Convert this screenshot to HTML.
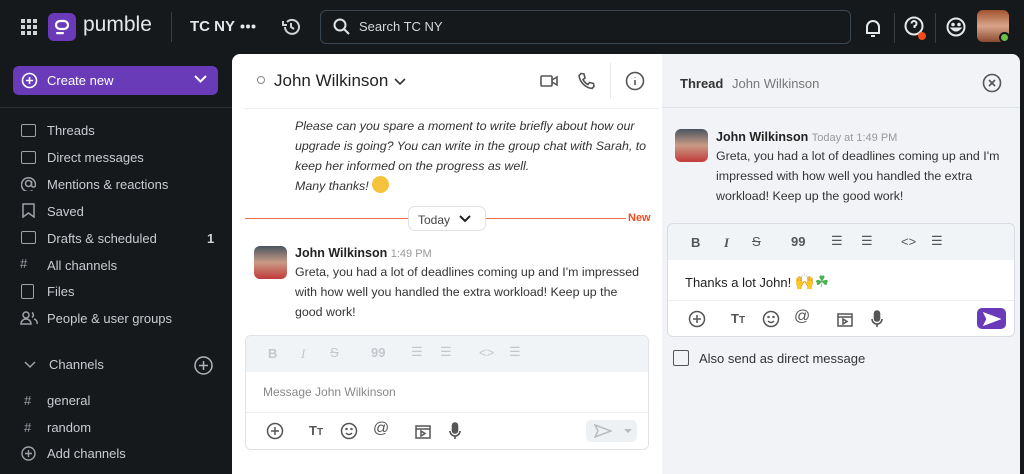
<!DOCTYPE html>
<html><head><meta charset="utf-8"><style>
*{box-sizing:border-box;margin:0;padding:0}
body{width:1024px;height:463px;overflow:hidden;background:#16191c;font-family:"Liberation Sans",sans-serif;position:relative}
.a{position:absolute}
.side{color:#c9ccd0;font-size:13px}
.side .it{position:absolute;left:47px}
.ic{position:absolute;left:21px;width:15px;height:13px;border:1.5px solid #9ea3a8;border-radius:2px}
svg{position:absolute}
.msg{font-size:12.4px}
</style></head><body>
<svg style="left:21px;top:19px" width="16" height="16"><g fill="#d0d3d6"><rect x="0" y="0" width="4" height="4"/><rect x="6" y="0" width="4" height="4"/><rect x="12" y="0" width="4" height="4"/><rect x="0" y="6" width="4" height="4"/><rect x="6" y="6" width="4" height="4"/><rect x="12" y="6" width="4" height="4"/><rect x="0" y="12" width="4" height="4"/><rect x="6" y="12" width="4" height="4"/><rect x="12" y="12" width="4" height="4"/></g></svg>
<div class="a" style="left:48px;top:13px;width:28px;height:28px;background:#6b3ab8;border-radius:6px"></div>
<svg style="left:48px;top:13px" width="28" height="28"><rect x="8" y="8" width="12" height="8" rx="4" fill="none" stroke="#fff" stroke-width="2.2"/><rect x="8" y="19" width="8" height="2.2" rx="1" fill="#fff"/></svg>
<div class="a" style="left:83px;top:13px;color:#e6e7e9;font-size:21px">pumble</div>
<div class="a" style="left:171px;top:12px;width:1px;height:30px;background:#3a3f44"></div>
<div class="a" style="left:190px;top:18px;color:#e6e7e9;font-size:15px;font-weight:bold">TC NY</div>
<svg style="left:240px;top:24px" width="16" height="5" fill="#e6e7e9"><circle cx="2.5" cy="2.5" r="2"/><circle cx="8" cy="2.5" r="2"/><circle cx="13.5" cy="2.5" r="2"/></svg>
<svg style="left:281px;top:17px" width="20" height="20" fill="none" stroke="#d0d3d6" stroke-width="2"><path d="M4 10a7 7 0 1 0 2-5"/><path d="M2 4v4h4"/><path d="M10 6v4l3 2"/></svg>
<div class="a" style="left:320px;top:10px;width:531px;height:34px;border:1.5px solid #3a4752;border-radius:6px"></div>
<svg style="left:333px;top:18px" width="18" height="18" fill="none" stroke="#e0e2e4" stroke-width="2"><circle cx="7" cy="7" r="5.5"/><path d="M11 11l5 5"/></svg>
<div class="a" style="left:359px;top:19px;color:#d6d8da;font-size:13px">Search TC NY</div>
<svg style="left:864px;top:18px" width="18" height="20" fill="none" stroke="#e6e7e9" stroke-width="2"><path d="M3 15V9a6 6 0 0 1 12 0v6zM2 15h14M7 18h4"/></svg>
<div class="a" style="left:894px;top:13px;width:1px;height:30px;background:#3a3f44"></div>
<svg style="left:904px;top:16px" width="22" height="22" fill="none" stroke="#e6e7e9" stroke-width="2"><circle cx="10" cy="10" r="8.5"/><path d="M7.5 7.5a2.5 2.5 0 1 1 3 2.5v2"/></svg>
<div class="a" style="left:918px;top:32px;width:8px;height:8px;border-radius:50%;background:#f04d1d"></div>
<div class="a" style="left:935px;top:13px;width:1px;height:30px;background:#3a3f44"></div>
<svg style="left:946px;top:17px" width="20" height="20" fill="none" stroke="#e6e7e9" stroke-width="2"><circle cx="10" cy="10" r="8.5"/><path d="M6 11.5q4 4 8 0z" fill="#e6e7e9"/><circle cx="7" cy="7.5" r=".8" fill="#e6e7e9"/><circle cx="13" cy="7.5" r=".8" fill="#e6e7e9"/></svg>
<div class="a" style="left:977px;top:10px;width:32px;height:32px;border-radius:6px;background:linear-gradient(#a0522d,#d9a58a 50%,#8b4a30)"></div>
<div class="a" style="left:999px;top:32px;width:11px;height:11px;border-radius:50%;background:#6cc04a;border:2px solid #16191c"></div>
<div class="a" style="left:13px;top:66px;width:205px;height:29px;background:#6a3bb8;border-radius:6px"></div>
<svg style="left:21px;top:72px" width="17" height="17" fill="none" stroke="#fff" stroke-width="1.6"><circle cx="8.5" cy="8.5" r="7"/><path d="M8.5 5v7M5 8.5h7"/></svg>
<div class="a" style="left:47px;top:73px;color:#fff;font-size:13px">Create new</div>
<svg style="left:194px;top:75px" width="13" height="9" fill="none" stroke="#fff" stroke-width="2"><path d="M1 1l5.5 5.5L12 1"/></svg>
<div class="a" style="left:0;top:107px;width:232px;height:1px;background:#2c3136"></div>
<div class="side">
<div class="ic" style="top:124px"></div><div class="it" style="top:123px">Threads</div>
<div class="ic" style="top:151px"></div><div class="it" style="top:150px">Direct messages</div>
<svg style="left:21px;top:176px" width="15" height="15" fill="none" stroke="#9ea3a8" stroke-width="1.5"><circle cx="7.5" cy="7.5" r="3"/><path d="M10.5 5v4a2 2 0 0 0 4 0 7 7 0 1 0-3 5.5"/></svg><div class="it" style="top:177px">Mentions &amp; reactions</div>
<svg style="left:22px;top:203px" width="13" height="15" fill="none" stroke="#9ea3a8" stroke-width="1.5"><path d="M1 1h11v13l-5.5-4L1 14z"/></svg><div class="it" style="top:204px">Saved</div>
<div class="ic" style="top:231px"></div><div class="it" style="top:231px">Drafts &amp; scheduled</div><div class="a" style="left:207px;top:231px;color:#d0d3d6;font-weight:bold">1</div>
<div class="a" style="left:20px;top:256px;color:#9ea3a8;font-size:13px">#</div><div class="it" style="top:258px">All channels</div>
<div class="ic" style="top:284px;width:13px;height:15px"></div><div class="it" style="top:284px">Files</div>
<svg style="left:20px;top:311px" width="18" height="14" fill="none" stroke="#9ea3a8" stroke-width="1.5"><circle cx="6" cy="4" r="3"/><path d="M1 13a5 5 0 0 1 10 0zM12 1.5a3 3 0 0 1 0 5M14 8a4 4 0 0 1 3 5"/></svg><div class="it" style="top:311px">People &amp; user groups</div>
<svg style="left:24px;top:361px" width="12" height="8" fill="none" stroke="#9ea3a8" stroke-width="1.5"><path d="M1 1l5 5 5-5"/></svg>
<div class="it" style="top:357px;left:49px">Channels</div>
<svg style="left:194px;top:356px" width="19" height="19" fill="none" stroke="#b0b4b8" stroke-width="1.5"><circle cx="9.5" cy="9.5" r="8.5"/><path d="M9.5 5v9M5 9.5h9"/></svg>
<div class="a" style="left:24px;top:393px;color:#9ea3a8">#</div><div class="it" style="top:393px">general</div>
<div class="a" style="left:24px;top:420px;color:#9ea3a8">#</div><div class="it" style="top:420px">random</div>
<svg style="left:21px;top:446px" width="15" height="15" fill="none" stroke="#9ea3a8" stroke-width="1.4"><circle cx="7.5" cy="7.5" r="6.5"/><path d="M7.5 4v7M4 7.5h7"/></svg><div class="it" style="top:446px">Add channels</div>
</div>
<div class="a" style="left:232px;top:54px;width:430px;height:420px;background:#fff;border-radius:8px 0 0 0"></div>
<div class="a" style="left:257px;top:76px;width:8px;height:8px;border:1.5px solid #888;border-radius:50%"></div>
<div class="a" style="left:274px;top:71px;color:#222;font-size:17px">John Wilkinson</div>
<svg style="left:394px;top:78px" width="12" height="8" fill="none" stroke="#333" stroke-width="1.6"><path d="M1 1l5 5 5-5"/></svg>
<svg style="left:540px;top:74px" width="18" height="14" fill="none" stroke="#555" stroke-width="1.6"><rect x="1" y="2" width="11" height="10" rx="1"/><path d="M12 6l5-3v8l-5-3"/></svg>
<svg style="left:578px;top:72px" width="18" height="18" fill="none" stroke="#555" stroke-width="1.6"><path d="M3 1.5l3 .5 1 4-2 1.5a10 10 0 0 0 5 5l1.5-2 4 1 .5 3-2 2A15 15 0 0 1 1 3.5z"/></svg>
<div class="a" style="left:610px;top:63px;width:1px;height:36px;background:#e6e8ea"></div>
<svg style="left:625px;top:71px" width="20" height="20" fill="none" stroke="#555" stroke-width="1.6"><circle cx="10" cy="10" r="8.5"/><path d="M10 9v5M10 6v.5"/></svg>
<div class="a" style="left:244px;top:108px;width:415px;height:1px;background:#eceef0"></div>
<div class="a msg" style="left:295px;top:116px;color:#333;font-style:italic;line-height:20px;white-space:nowrap">Please can you spare a moment to write briefly about how our<br>upgrade is going? You can write in the group chat with Sarah, to<br>keep her informed on the progress as well.<br>Many thanks! <span style="display:inline-block;width:17px;height:17px;border-radius:50%;background:#f5c33b;vertical-align:-3px"></span></div>
<div class="a" style="left:245px;top:218px;width:402px;height:1px;background:#f26b4a"></div>
<div class="a" style="left:408px;top:206px;width:78px;height:25px;background:#fff;border:1px solid #dde2e8;border-radius:7px;font-size:12px;color:#444;padding:6px 0 0 9px">Today</div>
<svg style="left:459px;top:215px" width="12" height="8" fill="none" stroke="#222" stroke-width="2"><path d="M1 1l5 5 5-5"/></svg>
<div class="a" style="left:626px;top:212px;background:#fff;color:#f04d1d;font-size:11px;font-weight:bold;padding-left:2px">New</div>
<div class="a" style="left:254px;top:246px;width:33px;height:33px;border-radius:6px;background:linear-gradient(#4a5560,#c99a85 50%,#c23a3a)"></div>
<div class="a" style="left:295px;top:246px;font-size:12.5px;color:#222"><b>John Wilkinson</b> <span style="font-size:11px;color:#999">1:49 PM</span></div>
<div class="a msg" style="left:295px;top:262px;color:#333;line-height:20px;white-space:nowrap">Greta, you had a lot of deadlines coming up and I'm impressed<br>with how well you handled the extra workload! Keep up the<br>good work!</div>
<div class="a" style="left:245px;top:335px;width:404px;height:115px;border:1px solid #dfe3e8;border-radius:6px;overflow:hidden">
<div style="height:36px;background:#f1f4f7;color:#c4c8cc;font-size:13px;position:relative">
<span class="a" style="left:22px;top:10px;font-weight:bold">B</span><span class="a" style="left:55px;top:10px;font-style:italic;font-family:'Liberation Serif'">I</span><span class="a" style="left:84px;top:9px;text-decoration:line-through">S</span>
<span class="a" style="left:125px;top:9px;font-weight:bold">99</span><span class="a" style="left:165px;top:8px">☰</span><span class="a" style="left:194px;top:8px">☰</span><span class="a" style="left:233px;top:9px">&lt;&gt;</span><span class="a" style="left:263px;top:8px">☰</span>
</div>
<div style="height:41px;border-bottom:1px solid #eceef0;color:#888;font-size:12px;padding:13px 0 0 17px">Message John Wilkinson</div>
</div>
<svg style="left:266px;top:422px" width="18" height="18" fill="none" stroke="#555" stroke-width="1.5"><circle cx="9" cy="9" r="7.5"/><path d="M9 5v8M5 9h8"/></svg>
<div class="a" style="left:309px;top:423px;color:#555;font-size:13px;font-weight:bold">T<span style="font-size:10px">T</span></div>
<svg style="left:340px;top:422px" width="18" height="18" fill="none" stroke="#555" stroke-width="1.5"><circle cx="9" cy="9" r="7.5"/><path d="M6 11q3 3 6 0"/><circle cx="6.5" cy="7" r=".5"/><circle cx="11.5" cy="7" r=".5"/></svg>
<div class="a" style="left:373px;top:420px;color:#555;font-size:16px">@</div>
<svg style="left:415px;top:423px" width="16" height="16" fill="none" stroke="#555" stroke-width="1.5"><rect x="1" y="3" width="14" height="12"/><path d="M1 6h14M6 8v5l4-2.5z"/></svg>
<svg style="left:449px;top:422px" width="12" height="18" fill="none" stroke="#555" stroke-width="1.6"><rect x="3.5" y="1" width="5" height="10" rx="2.5" fill="#555"/><path d="M1 9a5 5 0 0 0 10 0M6 14v3"/></svg>
<div class="a" style="left:586px;top:420px;width:51px;height:22px;background:#eef1f4;border-radius:5px"></div>
<svg style="left:594px;top:424px" width="18" height="14" fill="none" stroke="#bbb" stroke-width="1.5"><path d="M1 1l16 6-16 6 3-6z"/></svg>
<div class="a" style="left:624px;top:429px;border:4px solid transparent;border-top-color:#bbb"></div>
<div class="a" style="left:662px;top:54px;width:358px;height:420px;background:#f1f3f6;border-radius:0 8px 0 0"></div>
<div class="a" style="left:680px;top:76px;font-size:13px;color:#333"><b>Thread</b> <span style="color:#777;margin-left:5px">John Wilkinson</span></div>
<svg style="left:982px;top:73px" width="20" height="20" fill="none" stroke="#555" stroke-width="1.6"><circle cx="10" cy="10" r="8.5"/><path d="M7 7l6 6M13 7l-6 6"/></svg>
<div class="a" style="left:662px;top:107px;width:358px;height:1px;background:#e2e5e9"></div>
<div class="a" style="left:675px;top:129px;width:33px;height:33px;border-radius:6px;background:linear-gradient(#4a5560,#c99a85 50%,#c23a3a)"></div>
<div class="a" style="left:716px;top:130px;font-size:12.5px;color:#222"><b>John Wilkinson</b> <span style="font-size:11px;color:#999">Today at 1:49 PM</span></div>
<div class="a msg" style="left:716px;top:146px;color:#333;line-height:20px;white-space:nowrap">Greta, you had a lot of deadlines coming up and I'm<br>impressed with how well you handled the extra<br>workload! Keep up the good work!</div>
<div class="a" style="left:667px;top:223px;width:348px;height:114px;border:1px solid #d8dde3;border-radius:6px;overflow:hidden;background:#fff">
<div style="height:36px;background:#f1f4f7;color:#555;font-size:13px;position:relative">
<span class="a" style="left:23px;top:11px;font-weight:bold">B</span><span class="a" style="left:56px;top:11px;font-style:italic;font-family:'Liberation Serif';font-weight:bold">I</span><span class="a" style="left:84px;top:10px;text-decoration:line-through">S</span>
<span class="a" style="left:123px;top:10px;font-weight:bold">99</span><span class="a" style="left:163px;top:9px">☰</span><span class="a" style="left:193px;top:9px">☰</span><span class="a" style="left:233px;top:10px">&lt;&gt;</span><span class="a" style="left:263px;top:9px">☰</span>
</div>
<div style="height:41px;border-bottom:1px solid #eceef0;color:#222;font-size:13px;padding:12px 0 0 17px">Thanks a lot John! <span style="color:#f0a020;font-size:16px">🙌</span><span style="color:#4caf50;font-size:16px">☘</span></div>
</div>
<svg style="left:688px;top:310px" width="18" height="18" fill="none" stroke="#555" stroke-width="1.5"><circle cx="9" cy="9" r="7.5"/><path d="M9 5v8M5 9h8"/></svg>
<div class="a" style="left:731px;top:311px;color:#555;font-size:13px;font-weight:bold">T<span style="font-size:10px">T</span></div>
<svg style="left:762px;top:310px" width="18" height="18" fill="none" stroke="#555" stroke-width="1.5"><circle cx="9" cy="9" r="7.5"/><path d="M6 11q3 3 6 0"/><circle cx="6.5" cy="7" r=".5"/><circle cx="11.5" cy="7" r=".5"/></svg>
<div class="a" style="left:794px;top:308px;color:#555;font-size:16px">@</div>
<svg style="left:837px;top:311px" width="16" height="16" fill="none" stroke="#555" stroke-width="1.5"><rect x="1" y="3" width="14" height="12"/><path d="M1 6h14M6 8v5l4-2.5z"/></svg>
<svg style="left:871px;top:310px" width="12" height="18" fill="none" stroke="#555" stroke-width="1.6"><rect x="3.5" y="1" width="5" height="10" rx="2.5" fill="#555"/><path d="M1 9a5 5 0 0 0 10 0M6 14v3"/></svg>
<div class="a" style="left:977px;top:308px;width:29px;height:21px;background:#6a3bb8;border-radius:5px"></div>
<svg style="left:983px;top:312px" width="18" height="14" fill="#fff" stroke="#fff" stroke-width="1.2"><path d="M1 1l16 6-16 6 3-6z"/></svg>
<div class="a" style="left:673px;top:350px;width:16px;height:16px;border:1.5px solid #555;border-radius:2px"></div>
<div class="a" style="left:699px;top:351px;font-size:13px;color:#333">Also send as direct message</div>
</body></html>
